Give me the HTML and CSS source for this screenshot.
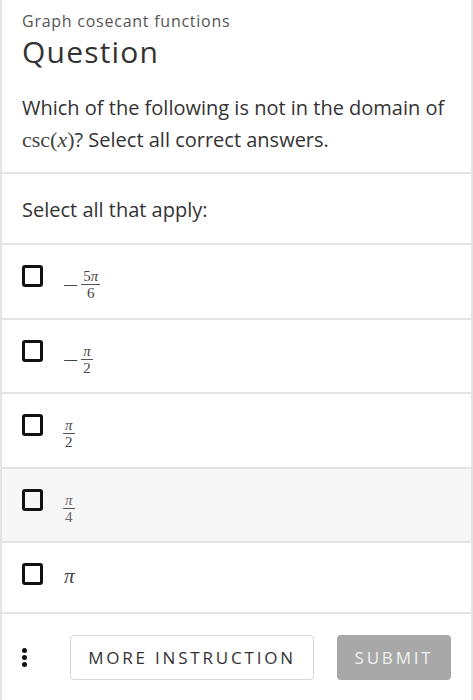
FILE: index.html
```html
<!DOCTYPE html>
<html>
<head>
<meta charset="utf-8">
<link rel="stylesheet" href="styles.css">
</head>
<body>
<div class="card">
  <div class="header">
    <div class="topic">Graph cosecant functions</div>
    <h1 class="title">Question</h1>
    <p class="prompt">Which of the following is not in the domain of <span class="m">csc(<i>x</i>)</span>? Select all correct answers.</p>
  </div>
  <div class="instr">Select all that apply:</div>
  <div class="opt">
    <span class="box"></span>
    <span class="math"><span class="minus">−</span><span class="frac"><span class="num">5<i>π</i></span><span class="den">6</span></span></span>
  </div>
  <div class="opt">
    <span class="box"></span>
    <span class="math"><span class="minus">−</span><span class="frac"><span class="num"><i>π</i></span><span class="den">2</span></span></span>
  </div>
  <div class="opt">
    <span class="box"></span>
    <span class="math"><span class="frac"><span class="num"><i>π</i></span><span class="den">2</span></span></span>
  </div>
  <div class="opt hover">
    <span class="box"></span>
    <span class="math"><span class="frac light"><span class="num"><i>π</i></span><span class="den">4</span></span></span>
  </div>
  <div class="opt short">
    <span class="box"></span>
    <span class="math solo"><i>π</i></span>
  </div>
  <div class="footer">
    <span class="dots"><span></span><span></span><span></span></span>
    <button class="btn more">MORE INSTRUCTION</button>
    <button class="btn submit">SUBMIT</button>
  </div>
</div>
</body>
</html>
```
FILE: styles.css
```css
html, body {
  margin: 0;
  padding: 0;
  background: #fff;
}
body {
  font-family: "Open Sans", "Liberation Sans", sans-serif;
  color: #333;
}
.card {
  width: 473px;
  height: 700px;
  box-sizing: border-box;
  border-left: 2px solid #e4e4e4;
  border-right: 2px solid #e4e4e4;
  overflow: hidden;
}
.header {
  padding: 10px 20px 0 20px;
  border-bottom: 2px solid #e4e4e4;
  height: 174px;
  box-sizing: border-box;
}
.topic {
  font-size: 16px;
  line-height: 22px;
  letter-spacing: 0.75px;
  color: #555;
}
.title {
  margin: 0;
  font-size: 30px;
  font-weight: 400;
  line-height: 40px;
  letter-spacing: 1.2px;
  color: #333;
}
.prompt {
  margin: 20px 0 0 0;
  font-size: 20px;
  line-height: 32px;
  color: #333;
}
.m {
  font-family: "Liberation Serif", "DejaVu Serif", serif;
  font-size: 22px;
  color: #444;
}
.instr {
  height: 71px;
  box-sizing: border-box;
  padding: 20px 20px 0 20px;
  font-size: 20px;
  line-height: 32px;
  border-bottom: 2px solid #e4e4e4;
}
.opt {
  display: flex;
  align-items: flex-start;
  height: 74.5px;
  box-sizing: border-box;
  padding: 20px 20px 0 20px;
  border-bottom: 2px solid #e4e4e4;
}
.opt.short {
  height: 71px;
}
.opt.hover {
  background: #f7f7f7;
}
.box {
  width: 21px;
  height: 22px;
  box-sizing: border-box;
  border: 3px solid #111;
  border-radius: 3px;
  flex: none;
}
.math {
  margin: 4px 0 0 20px;
  display: flex;
  align-items: center;
  font-family: "Liberation Serif", "DejaVu Serif", serif;
  color: #444;
}
.math.solo {
  margin-top: 3px;
  font-size: 21px;
  line-height: 20px;
  margin-left: 21px;
}
.minus {
  display: inline-block;
  font-size: 20px;
  line-height: 20px;
  margin: 0 5px 0 2px;
  transform: scaleX(1.4);
}
.frac {
  display: inline-flex;
  flex-direction: column;
  align-items: stretch;
  text-align: center;
  font-size: 15px;
  line-height: 15px;
}
.num {
  padding: 0 2px;
  border-bottom: 1px solid #555;
}
.den {
  padding: 1px 2px 0 2px;
}
.frac.light {
  color: #666;
}
.footer {
  display: flex;
  align-items: center;
  height: 86px;
  padding: 0 20px 0 20px;
  box-sizing: border-box;
}
.dots {
  display: flex;
  flex-direction: column;
  gap: 2px;
  width: 48px;
}
.dots span {
  width: 5px;
  height: 5px;
  border-radius: 50%;
  background: #111;
}
.btn {
  font-family: "Open Sans", "Liberation Sans", sans-serif;
  font-size: 17px;
  letter-spacing: 2.8px;
  height: 45px;
  border-radius: 4px;
  box-sizing: border-box;
  cursor: pointer;
  padding: 0;
}
.more {
  width: 244px;
  background: #fff;
  border: 1px solid #d8d8d8;
  color: #333;
}
.submit {
  margin-left: 23px;
  width: 114px;
  background: #a8a8a8;
  border: none;
  color: #f0f0f0;
}
```
